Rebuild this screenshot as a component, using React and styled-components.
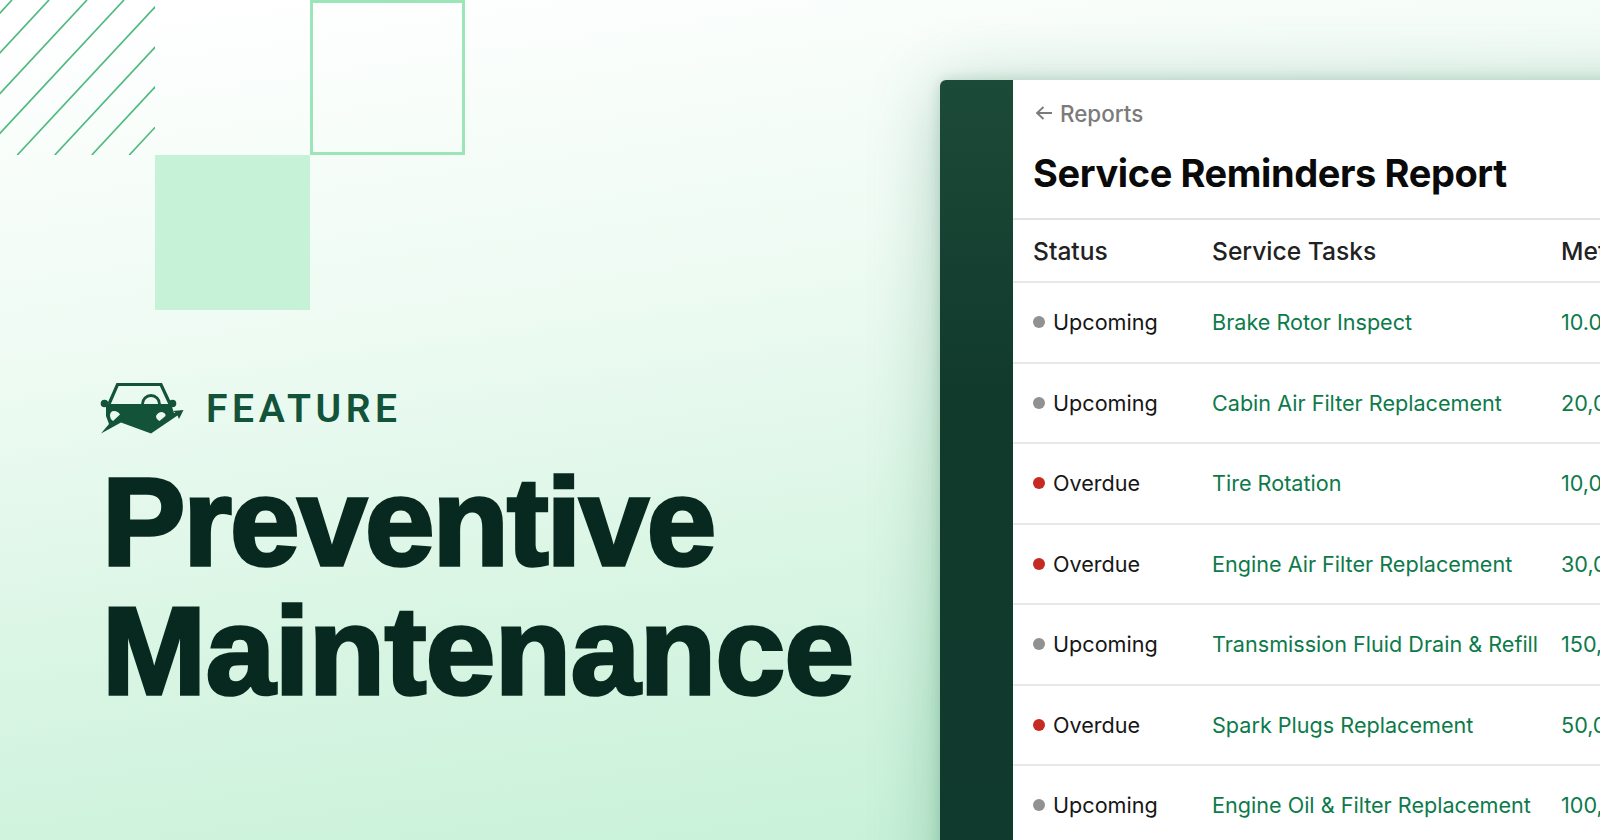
import React from "react";
import styled, { createGlobalStyle } from "styled-components";

const GlobalStyle = createGlobalStyle`
  html, body { margin: 0; padding: 0; background: #fff; }
  body { font-family: Inter, "Liberation Sans", sans-serif; }
`;

const Page = styled.div`
  width: 1600px;
  height: 840px;
  overflow: hidden;
  display: flex;
  background: linear-gradient(172deg, #ffffff 2%, #eefbf3 35%, #d8f5e3 65%, #c3f0d5 100%);
`;

const Left = styled.div`
  width: 940px;
  flex: none;
  display: flex;
  flex-direction: column;
`;

const Deco = styled.div`
  display: grid;
  grid-template-columns: repeat(3, 155px);
  grid-template-rows: repeat(2, 155px);
  height: 310px;
`;

const Hatch = styled.svg`
  display: block;
  width: 155px;
  height: 155px;
`;

const Filled = styled.div`
  grid-column: 2;
  grid-row: 2;
  background: #c6f2d7;
`;

const Outlined = styled.div`
  grid-column: 3;
  grid-row: 1;
  box-sizing: border-box;
  border: 3px solid #9be5b9;
`;

const Hero = styled.div`
  padding: 66px 0 0 96px;
`;

const Eyebrow = styled.div`
  display: flex;
  align-items: center;
  gap: 14px;
  height: 60px;
`;

const Feature = styled.span`
  padding-top: 7px;
  font-family: Roboto, Inter, sans-serif;
  font-size: 39px;
  font-weight: 600;
  letter-spacing: 4.6px;
  color: #13533a;
  line-height: 1;
`;

const Title = styled.h1`
  margin: 21px 0 0 6px;
  font-family: "Liberation Sans", Arial, sans-serif;
  font-size: 125px;
  font-weight: 700;
  line-height: 129.3px;
  color: #08291f;
  -webkit-text-stroke: 3.5px #08291f;
`;

const TitleLine = styled.span`
  display: block;
  letter-spacing: ${(p) => p.$spacing}px;
`;

const Panel = styled.div`
  flex: none;
  width: 900px;
  height: 900px;
  margin-top: 80px;
  display: flex;
  border-radius: 6px 0 0 0;
  box-shadow: 0 10px 70px rgba(24, 110, 68, 0.3), 0 0 14px rgba(24, 110, 68, 0.2);
  overflow: hidden;
`;

const Sidebar = styled.div`
  width: 73px;
  flex: none;
  background: linear-gradient(180deg, #1c4a38 0%, #113a2d 35%, #103a2d 100%);
`;

const Content = styled.div`
  flex: 1;
  background: #fff;
`;

const Head = styled.div`
  height: 140px;
  box-sizing: border-box;
  padding: 19px 0 0 20px;
  border-bottom: 2px solid #e2e2e2;
`;

const Back = styled.div`
  display: flex;
  align-items: center;
  gap: 7px;
  height: 28px;
  padding-left: 2px;
  font-size: 22.4px;
  font-weight: 500;
  color: #7b7b7b;
`;

const PageTitle = styled.div`
  margin-top: 22px;
  font-size: 38px;
  font-weight: 700;
  letter-spacing: -0.4px;
  line-height: 48px;
  color: #0a0a0a;
`;

const Row = styled.div`
  display: flex;
  align-items: center;
  height: ${(p) => (p.$header ? "63px" : "80.5px")};
  box-sizing: border-box;
  padding-left: 20px;
  border-bottom: 2px solid #e8e8e8;
  white-space: nowrap;
`;

const HeadCell = styled.div`
  width: ${(p) => p.$w}px;
  flex: none;
  font-size: 24.6px;
  font-weight: 500;
  color: #222;
`;

const StatusCell = styled.div`
  width: 179px;
  flex: none;
  display: flex;
  align-items: center;
  gap: 8px;
  font-size: 21.6px;
  color: #161616;
`;

const Dot = styled.span`
  width: 12px;
  height: 12px;
  border-radius: 50%;
  background: ${(p) => (p.$overdue ? "#c62a22" : "#919191")};
`;

const Task = styled.div`
  width: 349px;
  flex: none;
  font-size: 21.6px;
  color: #0d7a4a;
`;

const Meter = styled.div`
  font-size: 21.6px;
  color: #0d7a4a;
`;

const rows = [
  ["Upcoming", "Brake Rotor Inspect", "10.000 mi"],
  ["Upcoming", "Cabin Air Filter Replacement", "20,000 mi"],
  ["Overdue", "Tire Rotation", "10,000 mi"],
  ["Overdue", "Engine Air Filter Replacement", "30,000 mi"],
  ["Upcoming", "Transmission Fluid Drain & Refill", "150,000 mi"],
  ["Overdue", "Spark Plugs Replacement", "50,000 mi"],
  ["Upcoming", "Engine Oil & Filter Replacement", "100,000 mi"],
];

const hatchStarts = [12, 49, 87, 124, 161.5, 199, 236, 273.5];

function Logo() {
  return (
    <svg width="96" height="60" viewBox="0 0 96 60" fill="#13533a">
      <path d="M13 28 L21.500 8.500 H65 L74 28" fill="none" stroke="#13533a" strokeWidth="3.2" />
      <path d="M46.500 28 a8.500 8.500 0 0 1 17 0" fill="none" stroke="#13533a" strokeWidth="2.8" />
      <circle cx="8.500" cy="27.500" r="3.800" />
      <circle cx="76.500" cy="27.500" r="3.800" />
      <path
        fillRule="evenodd"
        d="M10 28 H75 L78 37 L79.500 36.500 L76.500 35 L87.500 34 L83 43 L81.500 39.500 L55 57.500 L25 46.500 L5 57.500 L13 48 L10 40 Z M14 40 Q14 35 18 35 Q22 35 24 38.500 L17 45 Q14 43 14 40 Z M60 40 Q62 36 66 36 Q70 37 69.500 40 L63.500 45 Q60 43 60 40 Z"
      />
    </svg>
  );
}

export default function App() {
  return (
    <Page>
      <GlobalStyle />
      <Left>
        <Deco>
          <Hatch viewBox="0 0 155 155">
            {hatchStarts.map((x) => (
              <line
                key={x}
                x1={x}
                y1="0"
                x2={x - 144.2}
                y2="155"
                stroke="#4fb981"
                strokeWidth="1.7"
              />
            ))}
          </Hatch>
          <Filled />
          <Outlined />
        </Deco>
        <Hero>
          <Eyebrow>
            <Logo />
            <Feature>FEATURE</Feature>
          </Eyebrow>
          <Title>
            <TitleLine $spacing={-2}>Preventive</TitleLine>
            <TitleLine $spacing={-0.5}>Maintenance</TitleLine>
          </Title>
        </Hero>
      </Left>
      <Panel>
        <Sidebar />
        <Content>
          <Head>
            <Back>
              <svg width="18" height="18" viewBox="0 0 18 18" fill="none" stroke="#7b7b7b" strokeWidth="1.8">
                <path d="M17 9 H2 M8.500 3 L2 9 L8.500 15" />
              </svg>
              Reports
            </Back>
            <PageTitle>Service Reminders Report</PageTitle>
          </Head>
          <Row $header>
            <HeadCell $w={179}>Status</HeadCell>
            <HeadCell $w={349}>Service Tasks</HeadCell>
            <HeadCell $w={200}>Meter</HeadCell>
          </Row>
          {rows.map(([status, task, meter]) => (
            <Row key={task}>
              <StatusCell>
                <Dot $overdue={status === "Overdue"} />
                {status}
              </StatusCell>
              <Task>{task}</Task>
              <Meter>{meter}</Meter>
            </Row>
          ))}
        </Content>
      </Panel>
    </Page>
  );
}
